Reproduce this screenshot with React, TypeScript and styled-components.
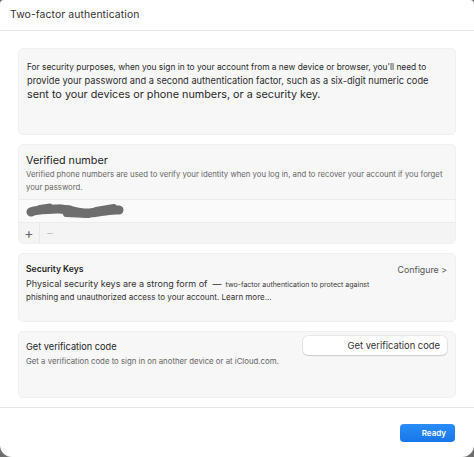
import styled, { createGlobalStyle } from "styled-components";

const Global = createGlobalStyle`
	html, body {
		margin: 0;
		padding: 0;
		background: #6f6f6f;
	}
	body {
		font-family: Inter, "Noto Sans", "Liberation Sans", sans-serif;
		-webkit-font-smoothing: antialiased;
	}
`;

const Window = styled.div`
	width: 474px;
	height: 457px;
	background: #ffffff;
	border-radius: 4px 4px 12px 12px;
	display: flex;
	flex-direction: column;
	overflow: hidden;
`;

const TitleBar = styled.header`
	height: 32px;
	display: flex;
	align-items: center;
	padding: 0 10px;
	border-bottom: 1px solid #e6e6e6;
	box-sizing: border-box;
	font-size: 10.4px;
	color: #333;
	letter-spacing: 0.1px;
`;

const Content = styled.main`
	flex: 1;
	display: flex;
	flex-direction: column;
	gap: 9px;
	padding: 17px 18px 9px;
	border-bottom: 1px solid #e6e6e6;
`;

const Card = styled.section<{ $height: number }>`
	height: ${p => p.$height}px;
	box-sizing: border-box;
	background: #f7f7f7;
	border: 1px solid #f0f0f0;
	border-radius: 5px;
	display: flex;
	flex-direction: column;
	overflow: hidden;
`;

const Intro = styled.div`
	padding: 11px 8px 0;
	color: #2a2a2a;
`;

const IntroLine = styled.div<{ $size: number }>`
	font-size: ${p => p.$size}px;
	line-height: 14px;
	white-space: nowrap;
`;

const CardBody = styled.div<{ $top: number }>`
	padding: ${p => p.$top}px 7px 5px;
`;

const CardTitle = styled.div<{ $size: number; $weight?: number }>`
	font-size: ${p => p.$size}px;
	font-weight: ${p => p.$weight ?? 400};
	color: #262626;
	line-height: 15px;
`;

const Desc = styled.div<{ $size: number }>`
	font-size: ${p => p.$size}px;
	color: #666;
	line-height: 13px;
`;

const PhoneRow = styled.div`
	height: 22px;
	border-top: 1px solid #ececec;
	border-bottom: 1px solid #ececec;
	background: #fafafa;
	display: flex;
	align-items: center;
	padding-left: 7px;
`;

const Toolbar = styled.div`
	flex: 1;
	display: flex;
	align-items: center;
	background: #f4f4f4;
`;

const ToolButton = styled.span<{ $muted?: boolean }>`
	width: 20px;
	display: flex;
	align-items: center;
	justify-content: center;
	color: ${p => (p.$muted ? "#c4c4c4" : "#666")};
	font-size: ${p => (p.$muted ? 12 : 14)}px;
	border-right: ${p => (p.$muted ? "none" : "1px solid #e8e8e8")};
	height: 100%;
`;

const Row = styled.div`
	display: flex;
	justify-content: space-between;
	align-items: flex-start;
`;

const Link = styled.span`
	font-size: 8.8px;
	color: #555;
	padding-top: 2px;
	padding-right: 1px;
`;

const KeyDesc = styled.div<{ $size: number }>`
	font-size: ${p => p.$size}px;
	color: #333;
	line-height: 13px;
	white-space: nowrap;
`;

const Small = styled.span`
	font-size: 7px;
	margin-left: 4px;
	color: #3a3a3a;
`;

const CodeButton = styled.button`
	width: 144px;
	height: 19px;
	border: none;
	border-radius: 5px;
	background: #ffffff;
	box-shadow: 0 0 0 0.5px rgba(0, 0, 0, 0.12), 0 1px 1.5px rgba(0, 0, 0, 0.12);
	font-family: inherit;
	font-size: 9.4px;
	color: #333;
	text-align: right;
	padding: 0 7px 0 0;
`;

const CodeBody = styled.div`
	padding: 4px 8px 0 7px;
`;

const Footer = styled.footer`
	height: 52px;
	display: flex;
	align-items: center;
	justify-content: flex-end;
	padding: 0 19px 0 0;
`;

const Ready = styled.button`
	width: 55px;
	height: 18px;
	border: none;
	border-radius: 4px;
	background: linear-gradient(#2a8cf7, #1776ea);
	color: #fff;
	font-family: inherit;
	font-size: 8px;
	font-weight: 600;
	text-align: right;
	padding: 0 9px 0 0;
	margin-top: 1px;
`;

function Scribble() {
	return (
		<svg width="100" height="18" viewBox="0 0 100 18">
			<g stroke="#6e6e6e" strokeLinecap="round" strokeLinejoin="round" fill="none">
				<path d="M5 10 C 12 7, 22 8, 30 7 C 40 6, 46 10, 58 11 C 70 12, 80 7, 93 8" strokeWidth="9" />
				<path d="M14 6 L 24 4.5 M 34 5.5 L 44 6.5 M 70 8 L 88 5" strokeWidth="6" />
				<path d="M40 12 L 62 13" strokeWidth="6" />
			</g>
		</svg>
	);
}

export default function App() {
	return (
		<>
			<Global />
			<Window>
				<TitleBar>Two-factor authentication</TitleBar>
				<Content>
					<Card $height={87}>
						<Intro>
							<IntroLine $size={8.35}>
								For security purposes, when you sign in to your account from a new device or browser, you'll need to
							</IntroLine>
							<IntroLine $size={9.25}>
								provide your password and a second authentication factor, such as a six-digit numeric code
							</IntroLine>
							<IntroLine $size={10.8}>sent to your devices or phone numbers, or a security key.</IntroLine>
						</Intro>
					</Card>
					<Card $height={100}>
						<CardBody $top={8}>
							<CardTitle $size={10.8}>Verified number</CardTitle>
							<Desc $size={7.75}>
								Verified phone numbers are used to verify your identity when you log in, and to recover your account if you forget your password.
							</Desc>
						</CardBody>
						<PhoneRow>
							<Scribble />
						</PhoneRow>
						<Toolbar>
							<ToolButton>+</ToolButton>
							<ToolButton $muted>−</ToolButton>
						</Toolbar>
					</Card>
					<Card $height={69}>
						<CardBody $top={8}>
							<Row>
								<CardTitle $size={8.6} $weight={600}>
									Security Keys
								</CardTitle>
								<Link>Configure &gt;</Link>
							</Row>
							<KeyDesc $size={9}>
								Physical security keys are a strong form of &nbsp;—<Small>two-factor authentication to protect against</Small>
							</KeyDesc>
							<KeyDesc $size={8}>phishing and unauthorized access to your account. Learn more...</KeyDesc>
						</CardBody>
					</Card>
					<Card $height={67}>
						<CodeBody>
							<Row>
								<CardTitle $size={9.2} style={{ paddingTop: 3 }}>
									Get verification code
								</CardTitle>
								<CodeButton>Get verification code</CodeButton>
							</Row>
							<Desc $size={7.8}>Get a verification code to sign in on another device or at iCloud.com.</Desc>
						</CodeBody>
					</Card>
				</Content>
				<Footer>
					<Ready>Ready</Ready>
				</Footer>
			</Window>
		</>
	);
}
